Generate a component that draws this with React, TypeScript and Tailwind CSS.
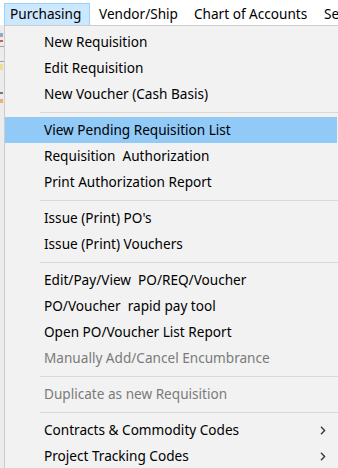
import React from "react";

type Item =
  | { kind: "item"; label: string; disabled?: boolean; active?: boolean; sub?: boolean }
  | { kind: "sep" };

const items: Item[] = [
  { kind: "item", label: "New Requisition" },
  { kind: "item", label: "Edit Requisition" },
  { kind: "item", label: "New Voucher (Cash Basis)" },
  { kind: "sep" },
  { kind: "item", label: "View Pending Requisition List", active: true },
  { kind: "item", label: "Requisition\u00a0 Authorization" },
  { kind: "item", label: "Print Authorization Report" },
  { kind: "sep" },
  { kind: "item", label: "Issue (Print) PO's" },
  { kind: "item", label: "Issue (Print) Vouchers" },
  { kind: "sep" },
  { kind: "item", label: "Edit/Pay/View\u00a0 PO/REQ/Voucher" },
  { kind: "item", label: "PO/Voucher\u00a0 rapid pay tool" },
  { kind: "item", label: "Open PO/Voucher List Report" },
  { kind: "item", label: "Manually Add/Cancel Encumbrance", disabled: true },
  { kind: "sep" },
  { kind: "item", label: "Duplicate as new Requisition", disabled: true },
  { kind: "sep" },
  { kind: "item", label: "Contracts & Commodity Codes", sub: true },
  { kind: "item", label: "Project Tracking Codes", sub: true },
];

function Chevron() {
  return (
    <svg width="6" height="9" viewBox="0 0 6 9" className="shrink-0">
      <polyline points="1,0.8 4.6,4.5 1,8.2" fill="none" stroke="#3a3a3a" strokeWidth="1.4" />
    </svg>
  );
}

export default function App() {
  return (
    <div
      className="w-[338px] h-[468px] overflow-hidden bg-white text-[13.6px] text-black"
      style={{ fontFamily: '"Noto Sans", "Open Sans", sans-serif' }}
    >
      {/* menu bar */}
      <div className="flex h-[25px] items-end overflow-hidden bg-white">
        <div className="ml-[4px] flex h-[22px] w-[86px] shrink-0 items-center border border-b-0 border-[#99d1ff] bg-[#cce8ff] pl-[5px] whitespace-nowrap">
          Purchasing
        </div>
        <div className="flex h-[22px] w-[95px] shrink-0 items-center pl-[9px] whitespace-nowrap">Vendor/Ship</div>
        <div className="flex h-[22px] w-[131px] shrink-0 items-center pl-[9px] whitespace-nowrap">Chart of Accounts</div>
        <div className="flex h-[22px] shrink-0 items-center pl-[8px] whitespace-nowrap">Setup</div>
      </div>
      <div className="flex h-[443px]">
        {/* background app sliver */}
        <div className="flex w-[4px] shrink-0 flex-col bg-[#ececec]">
          <div className="mt-[8px] h-[4px] w-[3px] bg-[#9aa7b8]" />
          <div className="mt-[3px] h-[2px] w-[3px] bg-[#d45a5a]" />
          <div className="mt-[4px] h-[1px] w-[4px] bg-[#a0a0a0]" />
          <div className="mt-[14px] h-[1px] w-[4px] bg-[#a0a0a0]" />
          <div className="mt-[2px] h-[6px] w-[3px] bg-[#f2dc9a]" />
          <div className="mt-[22px] h-[2px] w-[3px] bg-[#777]" />
          <div className="mt-[5px] h-[4px] w-[3px] bg-[#e8b27a]" />
          <div className="flex-1" />
        </div>
        <div className="flex flex-1 flex-col border-l border-t border-[#cccccc] bg-[#f2f2f2] pt-[3px]">
          {items.map((it, i) =>
            it.kind === "sep" ? (
              <div key={i} className="flex h-[10px] shrink-0 items-center pl-[35px]">
                <div className="h-px flex-1 bg-[#d9d9d9]" />
              </div>
            ) : (
              <div
                key={i}
                className={
                  "flex h-[26px] shrink-0 items-center justify-between pl-[39px] pr-[12px] whitespace-nowrap " +
                  (it.active ? "mr-[1px] bg-[#91c9f7] " : "") +
                  (it.disabled ? "text-[#7a7a7a]" : "text-black")
                }
              >
                <span className="pt-[1px]">{it.label}</span>
                {it.sub ? <Chevron /> : null}
              </div>
            )
          )}
        </div>
      </div>
    </div>
  );
}
